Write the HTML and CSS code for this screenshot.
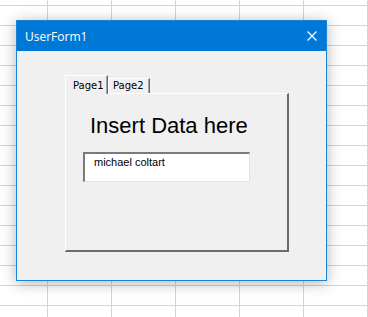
FILE: index.html
```html
<!DOCTYPE html>
<html lang="en">
<head>
    <meta charset="UTF-8">
    <meta name="viewport" content="width=device-width, initial-scale=1.0">
    <title>UserForm1</title>
    <link rel="stylesheet" href="styles.css">
</head>
<body>
    <div class="userform">
        <div class="titlebar">
            <span class="title">UserForm1</span>
            <svg class="close" width="10" height="10" viewBox="0 0 10 10">
                <path d="M0.5 0.5 L9.5 9.5 M9.5 0.5 L0.5 9.5" stroke="#fff" stroke-width="1.2" fill="none"/>
            </svg>
        </div>
        <div class="form-body">
            <div class="multipage">
                <div class="tabs">
                    <div class="tab selected">Page1</div>
                    <div class="tab">Page2</div>
                </div>
                <div class="page">
                    <div class="heading">Insert Data here</div>
                    <div class="textbox">michael coltart</div>
                </div>
            </div>
        </div>
    </div>
</body>
</html>
```

FILE: styles.css
```css
html, body {
    margin: 0;
    height: 100%;
}
body {
    background-color: #fff;
    background-image:
        linear-gradient(to right, #d4d4d4 1px, transparent 1px),
        linear-gradient(to bottom, #d4d4d4 1px, transparent 1px);
    background-size: 64px 20px;
    background-position: 47px 5px;
    overflow: hidden;
}
.userform {
    margin: 20px 0 0 16px;
    width: 311px;
    height: 261px;
    box-sizing: border-box;
    border: 1px solid #1883d7;
    background: #f0f0f0;
    box-shadow: 0 2px 14px rgba(0, 0, 0, 0.3);
}
.titlebar {
    height: 30px;
    background: #0078d7;
    display: flex;
    align-items: center;
    justify-content: space-between;
    padding: 0 9px 0 8px;
    color: #fff;
    font-family: "Open Sans", "Noto Sans", sans-serif;
    font-size: 12px;
}
.close {
    display: block;
}
.form-body {
    padding: 24px 0 0 48px;
}
.multipage {
    width: 224px;
}
.tabs {
    display: flex;
    align-items: flex-end;
    height: 18px;
}
.tab {
    box-sizing: border-box;
    height: 15px;
    padding: 0 5px 0 4px;
    border-top: 1px solid #fff;
    border-left: 1px solid #fff;
    border-right: 1px solid #696969;
    box-shadow: inset -1px 0 0 #a0a0a0;
    font-family: "DejaVu Sans", "Liberation Sans", sans-serif;
    font-size: 10px;
    line-height: 13px;
    color: #000;
    background: #f0f0f0;
}
.tab.selected {
    height: 19px;
    width: 43px;
    padding: 3px 0 0 7px;
    margin-bottom: -1px;
    position: relative;
    z-index: 1;
}
.page {
    box-sizing: border-box;
    height: 159px;
    border-top: 1px solid #fff;
    border-left: 1px solid #fff;
    border-right: 2px solid #6b6b6b;
    border-bottom: 2px solid #6b6b6b;
    padding: 19px 0 0 17px;
}
.heading {
    font-family: "Liberation Sans", Arial, sans-serif;
    font-size: 22px;
    line-height: 26px;
    color: #000;
    padding-left: 7px;
}
.textbox {
    box-sizing: border-box;
    margin-top: 13px;
    width: 167px;
    height: 30px;
    background: #fff;
    border-top: 2px solid #7a7a7a;
    border-left: 2px solid #7a7a7a;
    border-right: 1px solid #e3e3e3;
    border-bottom: 1px solid #e3e3e3;
    padding: 1px 0 0 9px;
    font-family: "Liberation Sans", Arial, sans-serif;
    font-size: 11px;
    line-height: 14px;
    color: #000;
}
```
